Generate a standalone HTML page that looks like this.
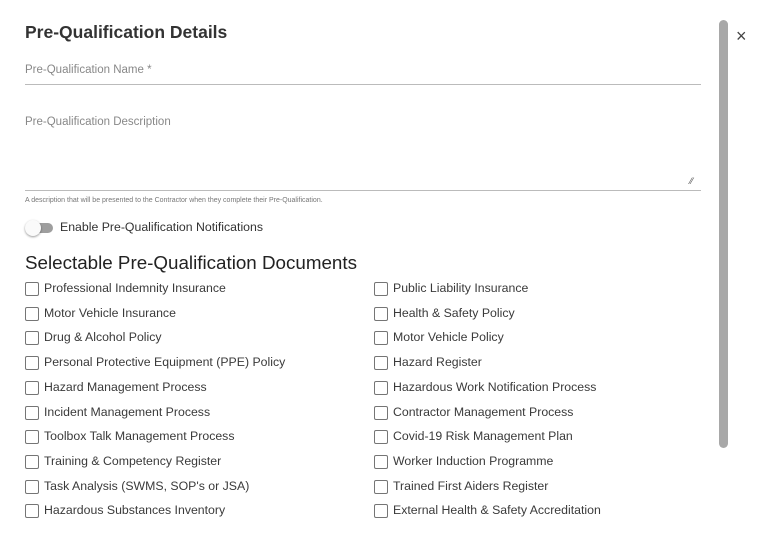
<!DOCTYPE html>
<html><head><style>
body{margin:0;width:768px;height:534px;background:#fff;font-family:"Liberation Sans",sans-serif;position:relative;overflow:hidden;color:#212121}
.a{position:absolute;white-space:nowrap}
.cb{position:absolute;width:12px;height:12px;border:1px solid #757575;border-radius:2px}
.t{position:absolute;font-size:12.3px;color:#3a3a3a}
</style></head><body>
<div class="a" style="left:25px;top:22px;font-size:17.5px;font-weight:bold;color:#333">Pre-Qualification Details</div>
<div class="a" style="left:25px;top:64px;font-size:11.5px;color:#888">Pre-Qualification Name *</div>
<div class="a" style="left:25px;top:84px;width:676px;height:1px;background:#bbb"></div>
<div class="a" style="left:25px;top:116px;font-size:11.5px;color:#888">Pre-Qualification Description</div>
<div class="a" style="left:690px;top:176px;font-size:9px;color:#555">⁄⁄</div>
<div class="a" style="left:25px;top:190px;width:676px;height:1px;background:#bbb"></div>
<div class="a" style="left:25px;top:197px;font-size:7px;color:#777">A description that will be presented to the Contractor when they complete their Pre-Qualification.</div>
<div class="a" style="left:29px;top:223px;width:24px;height:10px;border-radius:5px;background:#9e9e9e"></div>
<div class="a" style="left:25px;top:220px;width:16px;height:16px;border-radius:50%;background:#fafafa;box-shadow:0 1px 2px rgba(0,0,0,.4)"></div>
<div class="a" style="left:60px;top:220px;font-size:12.3px;color:#333">Enable Pre-Qualification Notifications</div>
<div class="a" style="left:25px;top:252px;font-size:18.8px;color:#222">Selectable Pre-Qualification Documents</div>
<div class="a" style="left:719px;top:20px;width:9px;height:428px;border-radius:5px;background:#a8a8a8"></div>
<div class="a" style="left:736px;top:26px;font-size:18px;color:#444">×</div>
<div id="L"></div>
<script>
var l=["Professional Indemnity Insurance","Motor Vehicle Insurance","Drug & Alcohol Policy","Personal Protective Equipment (PPE) Policy","Hazard Management Process","Incident Management Process","Toolbox Talk Management Process","Training & Competency Register","Task Analysis (SWMS, SOP's or JSA)","Hazardous Substances Inventory"];
var r=["Public Liability Insurance","Health & Safety Policy","Motor Vehicle Policy","Hazard Register","Hazardous Work Notification Process","Contractor Management Process","Covid-19 Risk Management Plan","Worker Induction Programme","Trained First Aiders Register","External Health & Safety Accreditation"];
var h="";
for(var i=0;i<10;i++){var y=282+i*24.7;
h+='<div class="cb" style="left:25px;top:'+y+'px"></div><div class="t" style="left:44px;top:'+(y-1)+'px">'+l[i].replace(/&/g,"&amp;")+'</div>';
h+='<div class="cb" style="left:374px;top:'+y+'px"></div><div class="t" style="left:393px;top:'+(y-1)+'px">'+r[i].replace(/&/g,"&amp;")+'</div>';}
document.getElementById("L").innerHTML=h;
</script>
</body></html>
